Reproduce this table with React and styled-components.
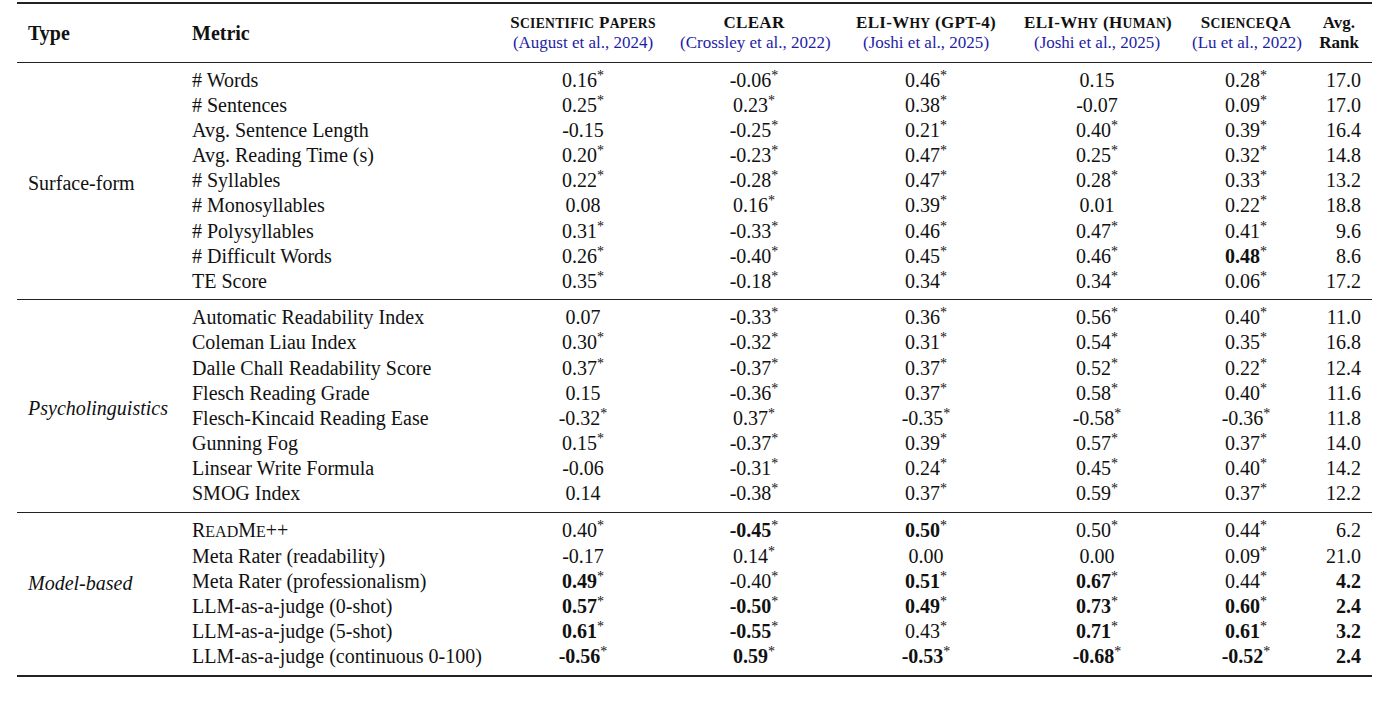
import { createGlobalStyle, styled } from 'styled-components';

const GlobalStyle = createGlobalStyle`
    body {
        margin: 0;
        background: #fff;
        color: #111;
        font-family: 'Liberation Serif', 'Times New Roman', serif;
    }
`;

const Page = styled.div`
    padding: 2px 11px 0 17px;
`;

const Table = styled.table`
    width: 1355px;
    border-collapse: collapse;
    table-layout: fixed;
    border-top: 2px solid #222;
    border-bottom: 2px solid #222;
`;

const HeadCell = styled.th`
    padding: 9px 11px 9px ${(props) => (props.$narrow ? '6px' : '11px')};
    font-size: ${(props) => (props.$big ? '20px' : '17px')};
    line-height: 20px;
    font-weight: 700;
    text-align: ${(props) => props.$align || 'center'};
    vertical-align: middle;
    white-space: nowrap;
    border-bottom: 1px solid #222;
`;

const DatasetName = styled.div`
    letter-spacing: 0.3px;
    height: 20px;
`;

const Small = styled.span`
    font-size: 0.8em;
    text-transform: uppercase;
`;

const Cite = styled.div`
    font-weight: 400;
    color: #1d1da6;
`;

const Section = styled.tbody`
    & + & {
        border-top: 1px solid #222;
    }
    & tr:first-child td {
        padding-top: 5px;
    }
    & tr:last-child td {
        padding-bottom: 5.5px;
    }
`;

const TypeCell = styled.td`
    padding: 0 11px ${(props) => (props.$lift ? '25px' : '0')};
    font-size: 20px;
    line-height: 25.1px;
    font-style: ${(props) => (props.$italic ? 'italic' : 'normal')};
    vertical-align: middle;
    white-space: nowrap;
`;

const MetricCell = styled.td`
    padding: 0 11px;
    font-size: 20px;
    line-height: 25.1px;
    white-space: nowrap;
`;

const ValueCell = styled.td`
    padding: 0 11px;
    font-size: 20px;
    line-height: 25.1px;
    text-align: ${(props) => (props.$right ? 'right' : 'center')};
    white-space: nowrap;
`;

const Num = styled.span`
    font-weight: ${(props) => (props.$bold ? 700 : 400)};
`;

const Star = styled.sup`
    font-size: 14px;
    line-height: 0;
    vertical-align: 7px;
    font-weight: 400;
`;

// lowercase runs become smaller capitals, like \textsc
function SmallCaps({ text }) {
    const parts = text.match(/[a-z]+|[^a-z]+/g) || [];
    return parts.map((p, i) =>
        /[a-z]/.test(p) ? <Small key={i}>{p}</Small> : <span key={i}>{p}</span>
    );
}

const datasets = [
    { name: 'Scientific Papers', cite: 'August et al., 2024' },
    { name: 'CLEAR', cite: 'Crossley et al., 2022' },
    { name: 'ELI-Why (GPT-4)', cite: 'Joshi et al., 2025' },
    { name: 'ELI-Why (Human)', cite: 'Joshi et al., 2025' },
    { name: 'ScienceQA', cite: 'Lu et al., 2022' },
];

// "!" prefix marks bold, trailing "*" marks significance
const sections = [
    {
        type: 'Surface-form',
        rows: [
            ['# Words', '0.16*', '-0.06*', '0.46*', '0.15', '0.28*', '17.0'],
            ['# Sentences', '0.25*', '0.23*', '0.38*', '-0.07', '0.09*', '17.0'],
            ['Avg. Sentence Length', '-0.15', '-0.25*', '0.21*', '0.40*', '0.39*', '16.4'],
            ['Avg. Reading Time (s)', '0.20*', '-0.23*', '0.47*', '0.25*', '0.32*', '14.8'],
            ['# Syllables', '0.22*', '-0.28*', '0.47*', '0.28*', '0.33*', '13.2'],
            ['# Monosyllables', '0.08', '0.16*', '0.39*', '0.01', '0.22*', '18.8'],
            ['# Polysyllables', '0.31*', '-0.33*', '0.46*', '0.47*', '0.41*', '9.6'],
            ['# Difficult Words', '0.26*', '-0.40*', '0.45*', '0.46*', '!0.48*', '8.6'],
            ['TE Score', '0.35*', '-0.18*', '0.34*', '0.34*', '0.06*', '17.2'],
        ],
    },
    {
        type: 'Psycholinguistics',
        italic: true,
        rows: [
            ['Automatic Readability Index', '0.07', '-0.33*', '0.36*', '0.56*', '0.40*', '11.0'],
            ['Coleman Liau Index', '0.30*', '-0.32*', '0.31*', '0.54*', '0.35*', '16.8'],
            ['Dalle Chall Readability Score', '0.37*', '-0.37*', '0.37*', '0.52*', '0.22*', '12.4'],
            ['Flesch Reading Grade', '0.15', '-0.36*', '0.37*', '0.58*', '0.40*', '11.6'],
            ['Flesch-Kincaid Reading Ease', '-0.32*', '0.37*', '-0.35*', '-0.58*', '-0.36*', '11.8'],
            ['Gunning Fog', '0.15*', '-0.37*', '0.39*', '0.57*', '0.37*', '14.0'],
            ['Linsear Write Formula', '-0.06', '-0.31*', '0.24*', '0.45*', '0.40*', '14.2'],
            ['SMOG Index', '0.14', '-0.38*', '0.37*', '0.59*', '0.37*', '12.2'],
        ],
    },
    {
        type: 'Model-based',
        italic: true,
        lift: true,
        rows: [
            ['ReadMe++', '0.40*', '!-0.45*', '!0.50*', '0.50*', '0.44*', '6.2'],
            ['Meta Rater (readability)', '-0.17', '0.14*', '0.00', '0.00', '0.09*', '21.0'],
            ['Meta Rater (professionalism)', '!0.49*', '-0.40*', '!0.51*', '!0.67*', '0.44*', '!4.2'],
            ['LLM-as-a-judge (0-shot)', '!0.57*', '!-0.50*', '!0.49*', '!0.73*', '!0.60*', '!2.4'],
            ['LLM-as-a-judge (5-shot)', '!0.61*', '!-0.55*', '0.43*', '!0.71*', '!0.61*', '!3.2'],
            ['LLM-as-a-judge (continuous 0-100)', '!-0.56*', '!0.59*', '!-0.53*', '!-0.68*', '!-0.52*', '!2.4'],
        ],
    },
];

const colWidths = [164, 316, 172, 170, 174, 168, 130, 61];

function Value({ raw }) {
    const bold = raw.startsWith('!');
    let text = bold ? raw.slice(1) : raw;
    const star = text.endsWith('*');
    if (star) text = text.slice(0, -1);
    return (
        <>
            <Num $bold={bold}>{text}</Num>
            {star && <Star>*</Star>}
        </>
    );
}

export default function App() {
    return (
        <Page>
            <GlobalStyle />
            <Table>
                <colgroup>
                    {colWidths.map((w, i) => (
                        <col key={i} style={{ width: w }} />
                    ))}
                </colgroup>
                <thead>
                    <tr>
                        <HeadCell $big $align="left">Type</HeadCell>
                        <HeadCell $big $align="left">Metric</HeadCell>
                        {datasets.map((d) => (
                            <HeadCell key={d.name}>
                                <DatasetName>
                                    <SmallCaps text={d.name} />
                                </DatasetName>
                                <Cite>({d.cite})</Cite>
                            </HeadCell>
                        ))}
                        <HeadCell $narrow>
                            <div>Avg.</div>
                            <div>Rank</div>
                        </HeadCell>
                    </tr>
                </thead>
                {sections.map((section) => (
                    <Section key={section.type}>
                        {section.rows.map((row, i) => (
                            <tr key={row[0]}>
                                {i === 0 && (
                                    <TypeCell
                                        rowSpan={section.rows.length}
                                        $italic={section.italic}
                                        $lift={section.lift}
                                    >
                                        {section.type}
                                    </TypeCell>
                                )}
                                <MetricCell>
                                    {row[0] === 'ReadMe++' ? (
                                        <SmallCaps text={row[0]} />
                                    ) : (
                                        row[0]
                                    )}
                                </MetricCell>
                                {row.slice(1).map((v, j) => (
                                    <ValueCell key={j} $right={j === 5}>
                                        <Value raw={v} />
                                    </ValueCell>
                                ))}
                            </tr>
                        ))}
                    </Section>
                ))}
            </Table>
        </Page>
    );
}
